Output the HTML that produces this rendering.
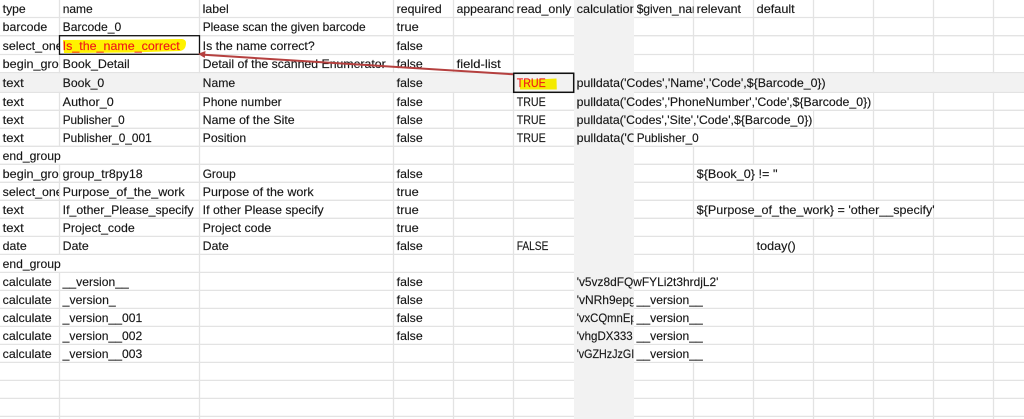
<!DOCTYPE html>
<html><head><meta charset="utf-8"><style>
html,body{margin:0;padding:0;background:#fff;width:1024px;height:419px;overflow:hidden}
svg{display:block}
text{font-family:"Liberation Sans",sans-serif;font-size:12px;fill:#161616;stroke:#161616;stroke-width:.14}
.g line{stroke:#e3e3e3;stroke-width:1.3}
.w rect{fill:#fff}
.r{fill:#f01818;stroke:#f01818}
</style></head><body>
<svg width="1024" height="419" viewBox="0 0 1024 419" xmlns="http://www.w3.org/2000/svg">
<defs>
<clipPath id="c1"><rect x="0" y="0" width="59" height="419"/></clipPath>
<clipPath id="c5"><rect x="454" y="0" width="59.5" height="419"/></clipPath>
<clipPath id="c7"><rect x="574" y="0" width="59.5" height="419"/></clipPath>
<clipPath id="c8"><rect x="634" y="0" width="59.5" height="419"/></clipPath>
</defs>
<g class="g">
<line x1="0" x2="1024" y1="17.5" y2="17.5"/><line x1="0" x2="1024" y1="35.7" y2="35.7"/><line x1="0" x2="1024" y1="54.5" y2="54.5"/><line x1="0" x2="1024" y1="72.7" y2="72.7"/><line x1="0" x2="1024" y1="92.3" y2="92.3"/><line x1="0" x2="1024" y1="110.3" y2="110.3"/><line x1="0" x2="1024" y1="128.3" y2="128.3"/><line x1="0" x2="1024" y1="146.3" y2="146.3"/><line x1="0" x2="1024" y1="164.3" y2="164.3"/><line x1="0" x2="1024" y1="182.3" y2="182.3"/><line x1="0" x2="1024" y1="200.3" y2="200.3"/><line x1="0" x2="1024" y1="218.3" y2="218.3"/><line x1="0" x2="1024" y1="236.4" y2="236.4"/><line x1="0" x2="1024" y1="254.4" y2="254.4"/><line x1="0" x2="1024" y1="272.4" y2="272.4"/><line x1="0" x2="1024" y1="290.4" y2="290.4"/><line x1="0" x2="1024" y1="308.4" y2="308.4"/><line x1="0" x2="1024" y1="326.4" y2="326.4"/><line x1="0" x2="1024" y1="344.4" y2="344.4"/><line x1="0" x2="1024" y1="362.4" y2="362.4"/><line x1="0" x2="1024" y1="380.4" y2="380.4"/><line x1="0" x2="1024" y1="398.4" y2="398.4"/><line x1="0" x2="1024" y1="416.4" y2="416.4"/>
<line x1="59.5" x2="59.5" y1="0" y2="419"/><line x1="199.5" x2="199.5" y1="0" y2="419"/><line x1="393.5" x2="393.5" y1="0" y2="419"/><line x1="453.5" x2="453.5" y1="0" y2="419"/><line x1="513.5" x2="513.5" y1="0" y2="419"/><line x1="693.5" x2="693.5" y1="0" y2="419"/><line x1="753.5" x2="753.5" y1="0" y2="419"/><line x1="813.5" x2="813.5" y1="0" y2="419"/><line x1="873.5" x2="873.5" y1="0" y2="419"/><line x1="933.5" x2="933.5" y1="0" y2="419"/><line x1="993.5" x2="993.5" y1="0" y2="419"/>
</g>
<!-- grid lines hidden behind overflowing cell text -->
<g class="w">
<rect x="634" y="93" width="239" height="16.600"/>
<rect x="634" y="111" width="179" height="16.600"/>
<rect x="634" y="129" width="60.500" height="16.600"/>
<rect x="58.500" y="147" width="2" height="16.600"/>
<rect x="58.500" y="255" width="2" height="16.700"/>
<rect x="752.500" y="165" width="2" height="16.600"/>
<rect x="694.500" y="201" width="238.500" height="16.600"/>
<rect x="634" y="273" width="60.500" height="16.700"/>
<rect x="634" y="291" width="60.500" height="16.700"/>
<rect x="634" y="309" width="60.500" height="16.700"/>
<rect x="634" y="327" width="60.500" height="16.700"/>
<rect x="634" y="345" width="60.500" height="16.700"/>
</g>
<!-- grey column and row -->
<rect x="574" y="0" width="60" height="419" fill="#f2f2f2"/>
<rect x="0" y="73.300" width="1024" height="18.400" fill="#f2f2f2"/>
<!-- yellow highlights -->
<path d="M63 40 L150 39.500 L182 39 Q186 39.500 186 43 Q186 50 180 51 L130 52.500 L64 53 Z" fill="#fff200"/>
<path d="M520 80 L546 79 L556.500 78.500 L556.800 89.500 L520 89.500 Z" fill="#f4ea00"/>

<!-- col 1 -->
<text x="2.700" y="13" textLength="23" lengthAdjust="spacingAndGlyphs">type</text>
<text x="2.700" y="31" textLength="44.500" lengthAdjust="spacingAndGlyphs">barcode</text>
<g clip-path="url(#c1)">
<text x="2.700" y="50" textLength="60" lengthAdjust="spacingAndGlyphs">select_one</text>
<text x="2.700" y="68" textLength="70" lengthAdjust="spacingAndGlyphs">begin_group</text>
<text x="2.700" y="178" textLength="70" lengthAdjust="spacingAndGlyphs">begin_group</text>
<text x="2.700" y="196" textLength="60" lengthAdjust="spacingAndGlyphs">select_one</text>
</g>
<text x="2.700" y="87" textLength="21" lengthAdjust="spacingAndGlyphs">text</text>
<text x="2.700" y="106" textLength="21" lengthAdjust="spacingAndGlyphs">text</text>
<text x="2.700" y="124" textLength="21" lengthAdjust="spacingAndGlyphs">text</text>
<text x="2.700" y="142" textLength="21" lengthAdjust="spacingAndGlyphs">text</text>
<text x="2.700" y="160" textLength="58" lengthAdjust="spacingAndGlyphs">end_group</text>
<text x="2.700" y="214" textLength="21" lengthAdjust="spacingAndGlyphs">text</text>
<text x="2.700" y="232" textLength="21" lengthAdjust="spacingAndGlyphs">text</text>
<text x="2.700" y="250" textLength="24" lengthAdjust="spacingAndGlyphs">date</text>
<text x="2.700" y="268" textLength="58" lengthAdjust="spacingAndGlyphs">end_group</text>
<text x="2.700" y="286" textLength="49" lengthAdjust="spacingAndGlyphs">calculate</text>
<text x="2.700" y="304" textLength="49" lengthAdjust="spacingAndGlyphs">calculate</text>
<text x="2.700" y="322" textLength="49" lengthAdjust="spacingAndGlyphs">calculate</text>
<text x="2.700" y="340" textLength="49" lengthAdjust="spacingAndGlyphs">calculate</text>
<text x="2.700" y="358" textLength="49" lengthAdjust="spacingAndGlyphs">calculate</text>

<!-- col 2 -->
<text x="62.700" y="13" textLength="30" lengthAdjust="spacingAndGlyphs">name</text>
<text x="62.700" y="31" textLength="58.500" lengthAdjust="spacingAndGlyphs">Barcode_0</text>
<text class="r" x="62.700" y="50" textLength="117" lengthAdjust="spacingAndGlyphs">Is_the_name_correct</text>
<text x="62.700" y="68" textLength="67" lengthAdjust="spacingAndGlyphs">Book_Detail</text>
<text x="62.700" y="87" textLength="41.500" lengthAdjust="spacingAndGlyphs">Book_0</text>
<text x="62.700" y="106" textLength="51" lengthAdjust="spacingAndGlyphs">Author_0</text>
<text x="62.700" y="124" textLength="62" lengthAdjust="spacingAndGlyphs">Publisher_0</text>
<text x="62.700" y="142" textLength="89" lengthAdjust="spacingAndGlyphs">Publisher_0_001</text>
<text x="62.700" y="178" textLength="80" lengthAdjust="spacingAndGlyphs">group_tr8py18</text>
<text x="62.700" y="196" textLength="122" lengthAdjust="spacingAndGlyphs">Purpose_of_the_work</text>
<text x="62.700" y="214" textLength="131" lengthAdjust="spacingAndGlyphs">If_other_Please_specify</text>
<text x="62.700" y="232" textLength="72" lengthAdjust="spacingAndGlyphs">Project_code</text>
<text x="62.700" y="250" textLength="26" lengthAdjust="spacingAndGlyphs">Date</text>
<text x="62.700" y="286" textLength="66" lengthAdjust="spacingAndGlyphs">__version__</text>
<text x="62.700" y="304" textLength="53" lengthAdjust="spacingAndGlyphs">_version_</text>
<text x="62.700" y="322" textLength="79.500" lengthAdjust="spacingAndGlyphs">_version__001</text>
<text x="62.700" y="340" textLength="79.500" lengthAdjust="spacingAndGlyphs">_version__002</text>
<text x="62.700" y="358" textLength="79.500" lengthAdjust="spacingAndGlyphs">_version__003</text>

<!-- col 3 -->
<text x="202.700" y="13" textLength="26" lengthAdjust="spacingAndGlyphs">label</text>
<text x="202.700" y="31" textLength="163" lengthAdjust="spacingAndGlyphs">Please scan the given barcode</text>
<text x="202.700" y="50" textLength="112" lengthAdjust="spacingAndGlyphs">Is the name correct?</text>
<text x="202.700" y="68" textLength="183" lengthAdjust="spacingAndGlyphs">Detail of the scanned Enumerator</text>
<text x="202.700" y="87" textLength="32.500" lengthAdjust="spacingAndGlyphs">Name</text>
<text x="202.700" y="106" textLength="79" lengthAdjust="spacingAndGlyphs">Phone number</text>
<text x="202.700" y="124" textLength="92" lengthAdjust="spacingAndGlyphs">Name of the Site</text>
<text x="202.700" y="142" textLength="43.500" lengthAdjust="spacingAndGlyphs">Position</text>
<text x="202.700" y="178" textLength="33" lengthAdjust="spacingAndGlyphs">Group</text>
<text x="202.700" y="196" textLength="111" lengthAdjust="spacingAndGlyphs">Purpose of the work</text>
<text x="202.700" y="214" textLength="121" lengthAdjust="spacingAndGlyphs">If other Please specify</text>
<text x="202.700" y="232" textLength="68.500" lengthAdjust="spacingAndGlyphs">Project code</text>
<text x="202.700" y="250" textLength="26" lengthAdjust="spacingAndGlyphs">Date</text>

<!-- col 4 -->
<text x="396.700" y="13" textLength="45" lengthAdjust="spacingAndGlyphs">required</text>
<text x="396.700" y="31" textLength="22" lengthAdjust="spacingAndGlyphs">true</text>
<text x="396.700" y="50" textLength="26" lengthAdjust="spacingAndGlyphs">false</text>
<text x="396.700" y="68" textLength="26" lengthAdjust="spacingAndGlyphs">false</text>
<text x="396.700" y="87" textLength="26" lengthAdjust="spacingAndGlyphs">false</text>
<text x="396.700" y="106" textLength="26" lengthAdjust="spacingAndGlyphs">false</text>
<text x="396.700" y="124" textLength="26" lengthAdjust="spacingAndGlyphs">false</text>
<text x="396.700" y="142" textLength="26" lengthAdjust="spacingAndGlyphs">false</text>
<text x="396.700" y="178" textLength="26" lengthAdjust="spacingAndGlyphs">false</text>
<text x="396.700" y="196" textLength="22" lengthAdjust="spacingAndGlyphs">true</text>
<text x="396.700" y="214" textLength="22" lengthAdjust="spacingAndGlyphs">true</text>
<text x="396.700" y="232" textLength="22" lengthAdjust="spacingAndGlyphs">true</text>
<text x="396.700" y="250" textLength="26" lengthAdjust="spacingAndGlyphs">false</text>
<text x="396.700" y="286" textLength="26" lengthAdjust="spacingAndGlyphs">false</text>
<text x="396.700" y="304" textLength="26" lengthAdjust="spacingAndGlyphs">false</text>
<text x="396.700" y="322" textLength="26" lengthAdjust="spacingAndGlyphs">false</text>
<text x="396.700" y="340" textLength="26" lengthAdjust="spacingAndGlyphs">false</text>

<!-- col 5 -->
<text clip-path="url(#c5)" x="456.700" y="13" textLength="64" lengthAdjust="spacingAndGlyphs">appearance</text>
<text x="456.700" y="68" textLength="44" lengthAdjust="spacingAndGlyphs">field-list</text>

<!-- col 6 -->
<text x="516.700" y="13" textLength="54.500" lengthAdjust="spacingAndGlyphs">read_only</text>
<text class="r" x="516.700" y="87" textLength="29" lengthAdjust="spacingAndGlyphs">TRUE</text>
<text x="516.700" y="106" textLength="29" lengthAdjust="spacingAndGlyphs">TRUE</text>
<text x="516.700" y="124" textLength="29" lengthAdjust="spacingAndGlyphs">TRUE</text>
<text x="516.700" y="142" textLength="29" lengthAdjust="spacingAndGlyphs">TRUE</text>
<text x="516.700" y="250" textLength="31.700" lengthAdjust="spacingAndGlyphs">FALSE</text>

<!-- col 7 -->
<text clip-path="url(#c7)" x="576.700" y="13" textLength="60" lengthAdjust="spacingAndGlyphs">calculation</text>
<text x="576.700" y="87" textLength="249" lengthAdjust="spacingAndGlyphs">pulldata('Codes','Name','Code',${Barcode_0})</text>
<text x="576.700" y="106" textLength="294.600" lengthAdjust="spacingAndGlyphs">pulldata('Codes','PhoneNumber','Code',${Barcode_0})</text>
<text x="576.700" y="124" textLength="235.700" lengthAdjust="spacingAndGlyphs">pulldata('Codes','Site','Code',${Barcode_0})</text>
<text clip-path="url(#c7)" x="576.700" y="142" textLength="262" lengthAdjust="spacingAndGlyphs">pulldata('Codes','Position','Code',${Barcode_0})</text>
<text x="576.700" y="286" textLength="141.700" lengthAdjust="spacingAndGlyphs">'v5vz8dFQwFYLi2t3hrdjL2'</text>
<text clip-path="url(#c7)" x="576.700" y="304" textLength="59" lengthAdjust="spacingAndGlyphs">'vNRh9epg</text>
<text clip-path="url(#c7)" x="576.700" y="322" textLength="60" lengthAdjust="spacingAndGlyphs">'vxCQmnEp</text>
<text clip-path="url(#c7)" x="576.700" y="340" textLength="56" lengthAdjust="spacingAndGlyphs">'vhgDX333</text>
<text clip-path="url(#c7)" x="576.700" y="358" textLength="57.500" lengthAdjust="spacingAndGlyphs">'vGZHzJzGI</text>

<!-- col 8 -->
<text clip-path="url(#c8)" x="636.700" y="13" textLength="72" lengthAdjust="spacingAndGlyphs">$given_name</text>
<text x="636.700" y="142" textLength="62" lengthAdjust="spacingAndGlyphs">Publisher_0</text>
<text x="636.700" y="304" textLength="66" lengthAdjust="spacingAndGlyphs">__version__</text>
<text x="636.700" y="322" textLength="66" lengthAdjust="spacingAndGlyphs">__version__</text>
<text x="636.700" y="340" textLength="66" lengthAdjust="spacingAndGlyphs">__version__</text>
<text x="636.700" y="358" textLength="66" lengthAdjust="spacingAndGlyphs">__version__</text>

<!-- col 9/10 -->
<text x="696.700" y="13" textLength="44.300" lengthAdjust="spacingAndGlyphs">relevant</text>
<text x="756.700" y="13" textLength="38" lengthAdjust="spacingAndGlyphs">default</text>
<text x="696.700" y="178" textLength="81" lengthAdjust="spacingAndGlyphs">${Book_0} != ''</text>
<text x="696.700" y="214" textLength="238" lengthAdjust="spacingAndGlyphs">${Purpose_of_the_work} = 'other__specify'</text>
<text x="756.700" y="250" textLength="39" lengthAdjust="spacingAndGlyphs">today()</text>

<!-- selection boxes -->
<rect x="59.500" y="35.700" width="140" height="18.600" fill="none" stroke="#111" stroke-width="1.300"/>
<rect x="513.700" y="73.300" width="60" height="19" fill="none" stroke="#111" stroke-width="1.500"/>
<!-- arrow -->
<path d="M513 74.300 L204 54.800" stroke="#b5403f" stroke-width="2" fill="none"/>
<path d="M198 53.900 L205.500 51 L204.800 58 Z" fill="#b5403f"/>
</svg>
</body></html>
